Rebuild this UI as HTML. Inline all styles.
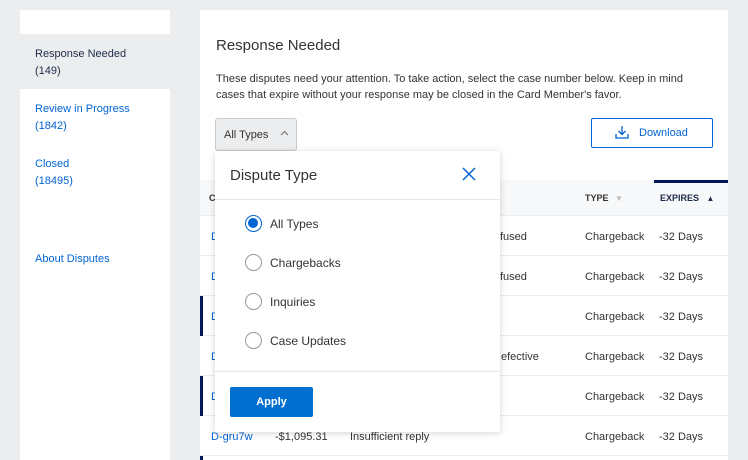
<!DOCTYPE html>
<html><head><style>
*{margin:0;padding:0;box-sizing:border-box}
body{width:748px;height:460px;overflow:hidden;background:#ecedee;font-family:"Liberation Sans",Arial,sans-serif;color:#333;position:relative;font-size:11px}
.a{position:absolute}
.lnk{color:#0064d2}
.row{position:absolute;left:200px;width:528px;height:40px;border-bottom:1px solid #ecedee;background:#fff}
.row span{position:absolute;top:15px;font-size:11px}
.bar{position:absolute;left:0;top:0;width:3px;height:40px;background:#00175a}
.radio{position:absolute;left:245px;width:17px;height:17px;border:1.5px solid #97999b;border-radius:50%;background:#fff}
.rl{position:absolute;left:270px;font-size:12px;color:#333}
</style></head><body>
<div class="a" style="left:20px;top:10px;width:150px;height:450px;background:#fff"></div>
<div class="a" style="left:20px;top:34px;width:150px;height:55px;background:#ecedee"></div>
<div class="a" style="left:35px;top:46px;line-height:17px;color:#1d2a4a">Response Needed<br>(149)</div>
<div class="a lnk" style="left:35px;top:101px;line-height:17px">Review in Progress<br>(1842)</div>
<div class="a lnk" style="left:35px;top:156px;line-height:17px">Closed<br>(18495)</div>
<div class="a lnk" style="left:35px;top:253px">About Disputes</div>

<div class="a" style="left:200px;top:10px;width:528px;height:450px;background:#fff"></div>
<div class="a" style="left:216px;top:37px;font-size:15px;color:#333">Response Needed</div>
<div class="a" style="left:216px;top:71px;line-height:16px;font-size:11px;color:#333">These disputes need your attention. To take action, select the case number below. Keep in mind<br>cases that expire without your response may be closed in the Card Member's favor.</div>
<div class="a" style="left:215px;top:118px;width:82px;height:33px;background:#ecedee;border:1px solid #c8c9ca;border-radius:3px;font-size:11px;padding:10px 0 0 8px">All Types</div>
<svg class="a" style="left:280px;top:130px" width="9" height="6" viewBox="0 0 9 6"><path d="M1 5L4.5 1.5 8 5" fill="none" stroke="#777" stroke-width="1.2"/></svg>
<div class="a" style="left:591px;top:118px;width:122px;height:30px;border:1px solid #0064d2;border-radius:2px;color:#0064d2;font-size:11px;padding:8px 0 0 47px">Download</div>
<svg class="a" style="left:614px;top:124px" width="16" height="16" viewBox="0 0 16 16"><path d="M8 2v8M4.5 7L8 10.5 11.5 7M2 10v4h12v-4" fill="none" stroke="#0064d2" stroke-width="1.3"/></svg>

<div class="a" style="left:200px;top:180px;width:528px;height:36px;background:#f7f8f9;border-bottom:1px solid #ecedee"></div>
<div class="a" style="left:209px;top:193px;font-size:9px;font-weight:bold;color:#333">C</div>
<div class="a" style="left:585px;top:193px;font-size:9px;font-weight:bold;color:#333">TYPE <span style="color:#bbb;font-size:8px;margin-left:4px">&#9660;</span></div>
<div class="a" style="left:654px;top:180px;width:74px;height:3px;background:#00175a"></div>
<div class="a" style="left:660px;top:193px;font-size:9px;font-weight:bold;color:#1d2a4a">EXPIRES <span style="font-size:8px;margin-left:5px">&#9650;</span></div>

<div class="row" style="top:216px"><span class="lnk" style="left:11px">D</span><span style="left:300px">fused</span><span style="left:385px">Chargeback</span><span style="left:459px">-32 Days</span></div>
<div class="row" style="top:256px"><span class="lnk" style="left:11px">D</span><span style="left:300px">fused</span><span style="left:385px">Chargeback</span><span style="left:459px">-32 Days</span></div>
<div class="row" style="top:296px"><div class="bar"></div><span class="lnk" style="left:11px">D</span><span style="left:385px">Chargeback</span><span style="left:459px">-32 Days</span></div>
<div class="row" style="top:336px"><span class="lnk" style="left:11px">D</span><span style="left:301px">efective</span><span style="left:385px">Chargeback</span><span style="left:459px">-32 Days</span></div>
<div class="row" style="top:376px"><div class="bar"></div><span class="lnk" style="left:11px">D</span><span style="left:385px">Chargeback</span><span style="left:459px">-32 Days</span></div>
<div class="row" style="top:416px"><span class="lnk" style="left:11px">D-gru7w</span><span style="left:75px">-$1,095.31</span><span style="left:150px">Insufficient reply</span><span style="left:385px">Chargeback</span><span style="left:459px">-32 Days</span></div>
<div class="a" style="left:200px;top:456px;width:3px;height:4px;background:#00175a"></div>

<div class="a" style="left:215px;top:151px;width:285px;height:281px;background:#fff;box-shadow:0 1px 6px rgba(0,0,0,.18)"></div>
<div class="a" style="left:230px;top:167px;font-size:15px;color:#333">Dispute Type</div>
<svg class="a" style="left:461px;top:166px" width="16" height="16" viewBox="0 0 16 16"><path d="M2 2L14 14M14 2L2 14" stroke="#0064d2" stroke-width="1.5"/></svg>
<div class="a" style="left:215px;top:199px;width:285px;height:1px;background:#e5e6e7"></div>
<div class="radio" style="top:215px;border-color:#0064d2"><div style="position:absolute;left:2px;top:2px;width:10px;height:10px;border-radius:50%;background:#0064d2"></div></div>
<div class="rl" style="top:217px">All Types</div>
<div class="radio" style="top:254px"></div><div class="rl" style="top:256px">Chargebacks</div>
<div class="radio" style="top:293px"></div><div class="rl" style="top:295px">Inquiries</div>
<div class="radio" style="top:332px"></div><div class="rl" style="top:334px">Case Updates</div>
<div class="a" style="left:215px;top:371px;width:285px;height:1px;background:#e5e6e7"></div>
<div class="a" style="left:230px;top:387px;width:83px;height:30px;background:#006fcf;border-radius:2px;color:#fff;font-weight:bold;font-size:11px;text-align:center;line-height:30px">Apply</div>
</body></html>
